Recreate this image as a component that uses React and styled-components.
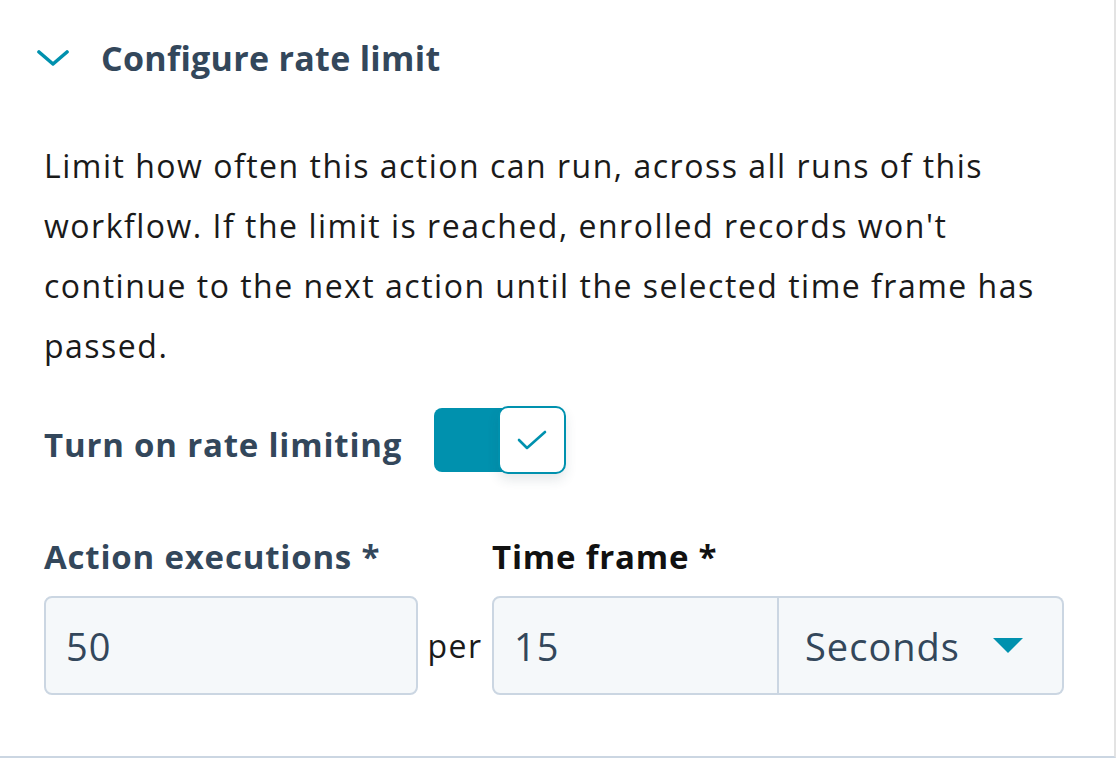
import React from 'react'
import styled, { createGlobalStyle } from 'styled-components'

const GlobalStyle = createGlobalStyle`
  html, body {
    margin: 0;
    padding: 0;
    background: #ffffff;
  }
  body {
    font-family: 'Open Sans', 'Noto Sans', sans-serif;
  }
`

const teal = '#0091ae'
const slate = '#33475b'

const Panel = styled.div`
  box-sizing: border-box;
  width: 1116px;
  height: 758px;
  border-right: 2px solid #e3e3e3;
  border-bottom: 2px solid #cbd6e2;
  padding: 0 0 0 44px;
`

const Header = styled.div`
  display: flex;
  align-items: center;
  height: 116px;
  margin-left: -7px;
  gap: 32px;
`

const Title = styled.h2`
  margin: 0;
  font-size: 34px;
  font-weight: 700;
  color: ${slate};
  letter-spacing: 0.3px;
`

const Description = styled.p`
  margin: 20px 0 0;
  width: 1000px;
  font-size: 32px;
  line-height: 60px;
  letter-spacing: 1.5px;
  color: #1a1a1a;
`

const ToggleRow = styled.div`
  display: flex;
  align-items: center;
  gap: 32px;
  margin-top: 30px;
`

const Label = styled.label`
  font-size: 33px;
  line-height: 40px;
  font-weight: 700;
  letter-spacing: 0.8px;
  color: ${(p) => p.$dark ? '#111111' : slate};
`

const ToggleLabel = styled(Label)`
  margin-top: 10px;
`

const Toggle = styled.div`
  position: relative;
  width: 132px;
  height: 68px;
  display: flex;
  justify-content: flex-end;
`

const Track = styled.div`
  position: absolute;
  left: 0;
  top: 2px;
  width: 100px;
  height: 64px;
  background: ${teal};
  border-radius: 8px;
`

const Knob = styled.div`
  position: relative;
  box-sizing: border-box;
  width: 68px;
  height: 68px;
  background: #ffffff;
  border: 2px solid ${teal};
  border-radius: 10px;
  box-shadow: 0 6px 12px rgba(45, 62, 80, 0.12);
  display: flex;
  align-items: center;
  justify-content: center;
`

const Fields = styled.div`
  display: flex;
  align-items: flex-end;
  margin-top: 63px;
`

const Field = styled.div`
  display: flex;
  flex-direction: column;
  gap: 19px;
`

const Input = styled.div`
  box-sizing: border-box;
  width: ${(p) => p.$w}px;
  height: 99px;
  background: #f5f8fa;
  border: 2px solid #cbd6e2;
  border-radius: ${(p) => p.$radius || '8px'};
  display: flex;
  align-items: center;
  justify-content: space-between;
  padding: 0 39px 0 ${(p) => p.$pad || 20}px;
  font-size: 38px;
  letter-spacing: 1px;
  color: ${slate};
`

const Per = styled.span`
  font-size: 32px;
  letter-spacing: 1.5px;
  color: #1a1a1a;
  width: 74px;
  height: 99px;
  display: flex;
  align-items: center;
  justify-content: center;
`

const Combo = styled.div`
  display: flex;
`

const Chevron = () => (
  <svg width="32" height="18" viewBox="0 0 32 18">
    <path d="M2 3 L16 15 L30 3" fill="none" stroke={teal} strokeWidth="3.6" strokeLinecap="round" strokeLinejoin="round" />
  </svg>
)

const Check = () => (
  <svg width="32" height="22" viewBox="0 0 32 22">
    <path d="M3 11 L11 19 L29 3" fill="none" stroke={teal} strokeWidth="2.6" strokeLinecap="round" strokeLinejoin="round" />
  </svg>
)

const Caret = () => (
  <svg width="30" height="16" viewBox="0 0 30 16">
    <path d="M0 0 H30 L15 15 Z" fill={teal} />
  </svg>
)

export default function App() {
  return (
    <>
      <GlobalStyle />
      <Panel>
        <Header>
          <Chevron />
          <Title>Configure rate limit</Title>
        </Header>
        <Description>
          Limit how often this action can run, across all runs of this workflow. If the limit is reached, enrolled records won't continue to the next action until the selected time frame has passed.
        </Description>
        <ToggleRow>
          <ToggleLabel>Turn on rate limiting</ToggleLabel>
          <Toggle>
            <Track />
            <Knob><Check /></Knob>
          </Toggle>
        </ToggleRow>
        <Fields>
          <Field>
            <Label>Action executions *</Label>
            <Input $w={374}>50</Input>
          </Field>
          <Per>per</Per>
          <Field>
            <Label $dark>Time frame *</Label>
            <Combo>
              <Input $w={287} $radius="8px 0 0 8px">15</Input>
              <Input $w={285} $radius="0 8px 8px 0" $pad={26} style={{ borderLeft: 'none' }}>
                Seconds
                <Caret />
              </Input>
            </Combo>
          </Field>
        </Fields>
      </Panel>
    </>
  )
}
